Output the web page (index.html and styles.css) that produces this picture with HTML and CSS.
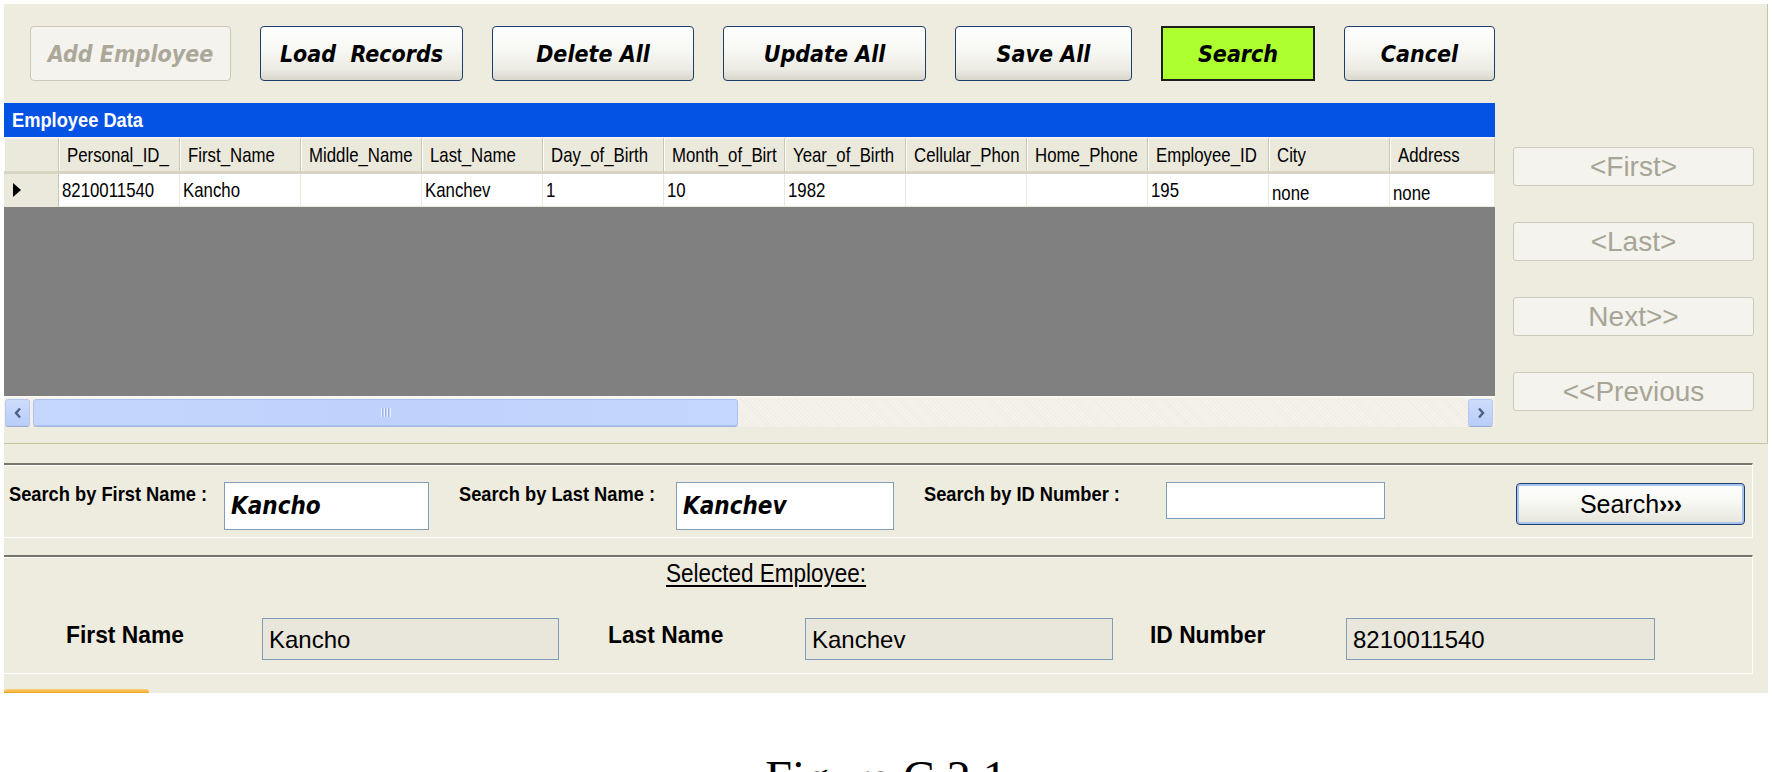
FILE: index.html
```html
<!DOCTYPE html>
<html lang="en">
<head>
<meta charset="utf-8">
<title>Employee Data</title>
<link rel="stylesheet" href="styles.css">
</head>
<body>
<div class="form">
  <div class="upper">
    <div class="main-col">
      <div class="toolbar">
        <button class="cmd disabled w-add">Add Employee</button>
        <button class="cmd w-load">Load&nbsp; Records</button>
        <button class="cmd w-delete">Delete All</button>
        <button class="cmd w-update">Update All</button>
        <button class="cmd w-save">Save All</button>
        <button class="cmd cmd-search w-search">Search</button>
        <button class="cmd w-cancel">Cancel</button>
      </div>

      <div class="grid">
        <div class="grid-caption"><span class="sq-cap">Employee Data</span></div>
        <div class="grid-rows">
          <div class="cell hcell"></div>
          <div class="cell hcell"><span class="sq">Personal_ID_</span></div>
          <div class="cell hcell"><span class="sq">First_Name</span></div>
          <div class="cell hcell"><span class="sq">Middle_Name</span></div>
          <div class="cell hcell"><span class="sq">Last_Name</span></div>
          <div class="cell hcell"><span class="sq">Day_of_Birth</span></div>
          <div class="cell hcell"><span class="sq">Month_of_Birt</span></div>
          <div class="cell hcell"><span class="sq">Year_of_Birth</span></div>
          <div class="cell hcell"><span class="sq">Cellular_Phon</span></div>
          <div class="cell hcell"><span class="sq">Home_Phone</span></div>
          <div class="cell hcell"><span class="sq">Employee_ID</span></div>
          <div class="cell hcell"><span class="sq">City</span></div>
          <div class="cell hcell"><span class="sq">Address</span></div>

          <div class="cell dcell rowhead"><span class="current"></span></div>
          <div class="cell dcell"><span class="sq">8210011540</span></div>
          <div class="cell dcell"><span class="sq">Kancho</span></div>
          <div class="cell dcell"></div>
          <div class="cell dcell"><span class="sq">Kanchev</span></div>
          <div class="cell dcell"><span class="sq">1</span></div>
          <div class="cell dcell"><span class="sq">10</span></div>
          <div class="cell dcell"><span class="sq">1982</span></div>
          <div class="cell dcell"></div>
          <div class="cell dcell"></div>
          <div class="cell dcell"><span class="sq">195</span></div>
          <div class="cell dcell low"><span class="sq">none</span></div>
          <div class="cell dcell low"><span class="sq">none</span></div>
        </div>
        <div class="grid-empty"></div>
        <div class="hscroll">
          <div class="sb-arrow">
            <svg width="10" height="12" viewBox="0 0 10 12"><path d="M7 1.5 L3 6 L7 10.5" fill="none" stroke="#4d6185" stroke-width="2.4"/></svg>
          </div>
          <div class="sb-thumb"><span class="grip"></span></div>
          <div class="sb-track"></div>
          <div class="sb-arrow">
            <svg width="10" height="12" viewBox="0 0 10 12"><path d="M3 1.5 L7 6 L3 10.5" fill="none" stroke="#4d6185" stroke-width="2.4"/></svg>
          </div>
        </div>
      </div>
    </div>

    <div class="nav-col">
      <button class="nav">&lt;First&gt;</button>
      <button class="nav">&lt;Last&gt;</button>
      <button class="nav">Next&gt;&gt;</button>
      <button class="nav">&lt;&lt;Previous</button>
    </div>
  </div>

  <div class="panel search-panel">
    <span class="lbl lbl-s1"><span class="sq-lbl">Search by First Name :</span></span>
    <div class="box box-edit box-tall w-in1"><span class="heavy">Kancho</span></div>
    <span class="lbl lbl-s2"><span class="sq-lbl">Search by Last Name :</span></span>
    <div class="box box-edit box-tall w-in2"><span class="heavy">Kanchev</span></div>
    <span class="lbl lbl-s3"><span class="sq-lbl">Search by ID Number :</span></span>
    <div class="box box-edit box-short w-in3"></div>
    <button class="go">Search<b class="chev">&rsaquo;&rsaquo;&rsaquo;</b></button>
  </div>

  <div class="panel selected-panel">
    <div class="sel-title"><span class="sq-title">Selected Employee:</span></div>
    <div class="sel-row">
      <span class="big-lbl l-first"><span class="sq-big">First Name</span></span>
      <div class="box box-ro w-ro1">Kancho</div>
      <span class="big-lbl l-last"><span class="sq-big">Last Name</span></span>
      <div class="box box-ro w-ro2">Kanchev</div>
      <span class="big-lbl l-id"><span class="sq-big">ID Number</span></span>
      <div class="box box-ro w-ro3">8210011540</div>
    </div>
  </div>

  <div class="tabstrip"><span class="tab"></span></div>
</div>

<div class="caption">Figure C.2.1</div>
</body>
</html>
```

FILE: styles.css
```css
* {
  box-sizing: border-box;
}

html,
body {
  margin: 0;
  padding: 0;
  background: #ffffff;
}

body {
  width: 1772px;
  height: 772px;
  overflow: hidden;
  font-family: "Liberation Sans", Arial, sans-serif;
  color: #000;
}

button {
  font: inherit;
  color: inherit;
  padding: 0;
  margin: 0;
  cursor: default;
}

/* narrow faces: the form's sans text is drawn condensed */
.sq,
.sq-cap,
.sq-lbl,
.sq-title,
.sq-big {
  display: inline-block;
  white-space: nowrap;
  transform-origin: left center;
}

.sq { transform: scaleX(0.8); }
.sq-cap { transform: scaleX(0.87); }
.sq-lbl { transform: scaleX(0.87); }
.sq-title { transform: scaleX(0.9); }
.sq-big { transform: scaleX(0.95); }

/* window surface */
.form {
  margin: 4px 0 0 4px;
  width: 1764px;
  height: 689px;
  background: #eeebdf;
  display: flex;
  flex-direction: column;
}

.upper {
  display: flex;
  height: 440px;
  flex: none;
  border-right: 1px solid #c8c49c;
  border-bottom: 1px solid #c8c49c;
}

.main-col {
  width: 1491px;
  display: flex;
  flex-direction: column;
}

/* command buttons */
.toolbar {
  display: flex;
  gap: 29px;
  height: 77px;
  padding: 22px 0 0 26px;
}

.cmd {
  height: 55px;
  border: 1px solid #1d3f6e;
  border-radius: 4px;
  background: linear-gradient(#ffffff 0%, #f7f7f3 45%, #ecebe4 80%, #d9d6cb 100%);
  font-family: "DejaVu Sans Condensed", "DejaVu Sans", sans-serif;
  font-stretch: condensed;
  font-weight: bold;
  font-style: italic;
  font-size: 23px;
}

.cmd.disabled {
  border-color: #cbc8b8;
  background: #f4f3ee;
  color: #aca899;
}

.cmd-search {
  background: #adff2f;
  border: 2px solid #1e1e1e;
  border-radius: 0;
}

.w-add { width: 201px; }
.w-load { width: 203px; }
.w-delete { width: 202px; }
.w-update { width: 203px; }
.w-save { width: 177px; }
.w-search { width: 154px; }
.w-cancel { width: 151px; }

/* data grid */
.grid {
  margin-top: 22px;
  display: flex;
  flex-direction: column;
  width: 1491px;
}

.grid-caption {
  height: 34px;
  background: #0553e4;
  color: #ffffff;
  font-weight: bold;
  font-size: 21px;
  line-height: 34px;
  padding-left: 8px;
}

.grid-rows {
  display: grid;
  grid-template-columns: 55px repeat(11, 121px) 105px;
  grid-template-rows: 37px 33px;
  overflow: hidden;
  font-size: 21px;
}

.cell {
  white-space: nowrap;
  overflow: hidden;
  display: flex;
  align-items: center;
}

.hcell {
  background: #ebe9dc;
  border-top: 2px solid #f6f5ef;
  border-bottom: 3px solid #d8d4c4;
  border-right: 1px solid #c9c6b3;
  box-shadow: inset 1px 0 0 #ffffff;
  padding: 0 0 0 8px;
}

.dcell {
  background: #ffffff;
  border-right: 1px solid #ebe8dc;
  border-bottom: 1px solid #ebe8dc;
  padding-left: 3px;
}

.dcell.low {
  padding-top: 5px;
}

.dcell.rowhead {
  background: #ebe9dc;
  border-right: 1px solid #c9c6b3;
  padding-left: 9px;
}

.current {
  width: 0;
  height: 0;
  border-top: 7px solid transparent;
  border-bottom: 7px solid transparent;
  border-left: 8px solid #000;
}

.grid-empty {
  height: 189px;
  background: #808080;
}

.hscroll {
  height: 31px;
  display: flex;
  align-items: center;
  gap: 3px;
  padding: 0 2px 0 1px;
  background-color: #f4f2ea;
  background-image: repeating-linear-gradient(45deg, rgba(0, 0, 0, 0.025) 0 1px, transparent 1px 3px);
  border-top: 2px solid #f9f8f3;
}

.sb-arrow {
  width: 25px;
  height: 27px;
  border: 1px solid #b6c8ef;
  border-radius: 3px;
  background: linear-gradient(#cfdcfc, #b9cdfa);
  box-shadow: 0 1px 0 #9aabd4;
  display: flex;
  align-items: center;
  justify-content: center;
}

.sb-thumb {
  width: 705px;
  height: 27px;
  border: 1px solid #adc1f1;
  border-radius: 3px;
  background: linear-gradient(90deg, #c5d6fd, #c0d2fc 50%, #c5d6fd);
  box-shadow: 0 1px 0 #a3b6df;
  display: flex;
  align-items: center;
  justify-content: center;
}

.grip {
  width: 10px;
  height: 9px;
  background: repeating-linear-gradient(90deg, #e9efff 0 1px, #97aee6 1px 2px, transparent 2px 3px);
}

.sb-track {
  flex: 1;
}

/* record navigation */
.nav-col {
  margin-left: 18px;
  width: 241px;
  padding-top: 143px;
  display: flex;
  flex-direction: column;
  gap: 36px;
}

.nav {
  height: 39px;
  border: 1px solid #cdcabc;
  border-radius: 3px;
  background: #f4f3ed;
  color: #a8a596;
  font-size: 28px;
  line-height: 1;
}

/* etched panels */
.panel {
  width: 1749px;
  flex: none;
  border-top: 2px solid #77766c;
  border-right: 1px solid #ffffff;
  border-bottom: 1px solid #ffffff;
  box-shadow: inset 0 1px 0 #ffffff;
}

.search-panel {
  margin-top: 19px;
  height: 75px;
  display: flex;
  align-items: flex-start;
  padding: 17px 0 0 5px;
}

.lbl {
  font-size: 21px;
  font-weight: bold;
  line-height: 24px;
  white-space: nowrap;
  flex: none;
}

.lbl-s1 { width: 215px; }
.lbl-s2 { width: 217px; margin-left: 30px; }
.lbl-s3 { width: 242px; margin-left: 30px; }

.box {
  flex: none;
  border: 1px solid #7f9db9;
  display: flex;
  align-items: center;
  padding-left: 6px;
}

.box-edit {
  background: #ffffff;
}

.box-tall { height: 48px; }
.box-short { height: 37px; }

.w-in1 { width: 205px; }
.w-in2 { width: 218px; }
.w-in3 { width: 219px; }

.heavy {
  font-family: "DejaVu Sans Condensed", "DejaVu Sans", sans-serif;
  font-stretch: condensed;
  font-weight: bold;
  font-style: italic;
  font-size: 24px;
}

.go {
  margin-left: 131px;
  margin-top: 1px;
  width: 229px;
  height: 42px;
  border: 1px solid #1d3f6e;
  border-radius: 4px;
  background: linear-gradient(#ffffff 0%, #f6f6f2 50%, #e6e4da 100%);
  box-shadow: inset 0 0 0 2px #a8c3ee;
  font-size: 25px;
}

.chev {
  font-weight: bold;
  font-size: 25px;
  letter-spacing: -1px;
}

.selected-panel {
  margin-top: 17px;
  height: 119px;
  padding-top: 1px;
}

.sel-title {
  margin-left: 662px;
  font-size: 25px;
  line-height: 30px;
}

.sel-title .sq-title {
  text-decoration: underline;
  text-underline-offset: 3px;
}

.sel-row {
  margin-top: 30px;
  display: flex;
  align-items: flex-start;
}

.big-lbl {
  flex: none;
  font-size: 24px;
  font-weight: bold;
  line-height: 30px;
  margin-top: 2px;
  white-space: nowrap;
}

.l-first { margin-left: 62px; width: 196px; }
.l-last { margin-left: 49px; width: 197px; }
.l-id { margin-left: 37px; width: 196px; }

.box-ro {
  height: 42px;
  background: #e9e6db;
  font-size: 24px;
  padding-top: 2px;
}

.w-ro1 { width: 297px; }
.w-ro2 { width: 308px; }
.w-ro3 { width: 309px; }

/* tab strip at the foot of the window */
.tabstrip {
  flex: 1;
  display: flex;
  align-items: flex-end;
}

.tab {
  width: 145px;
  height: 4px;
  border-radius: 3px 3px 0 0;
  background: linear-gradient(#ffd37a, #f2a51f);
}

.caption {
  margin-top: 61px;
  text-align: center;
  font-family: "Liberation Serif", serif;
  font-size: 48px;
  line-height: 48px;
}
```
